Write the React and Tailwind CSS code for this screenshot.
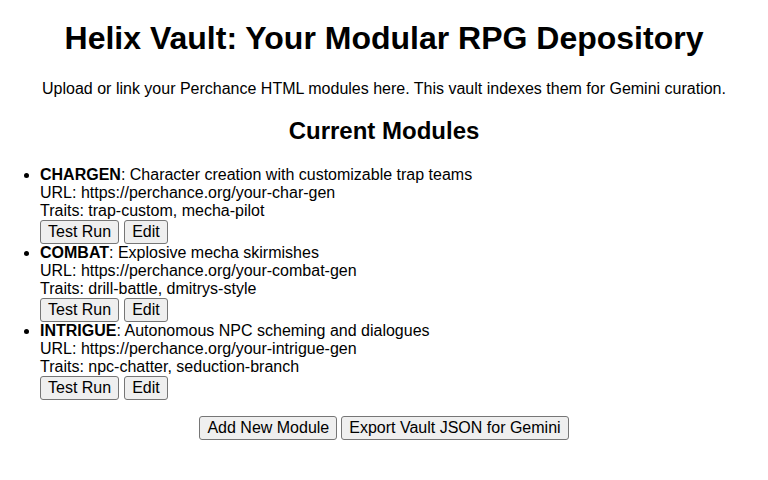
import React from 'react';

const modules = [
  {
    name: 'CHARGEN',
    desc: 'Character creation with customizable trap teams',
    url: 'https://perchance.org/your-char-gen',
    traits: 'trap-custom, mecha-pilot',
  },
  {
    name: 'COMBAT',
    desc: 'Explosive mecha skirmishes',
    url: 'https://perchance.org/your-combat-gen',
    traits: 'drill-battle, dmitrys-style',
  },
  {
    name: 'INTRIGUE',
    desc: 'Autonomous NPC scheming and dialogues',
    url: 'https://perchance.org/your-intrigue-gen',
    traits: 'npc-chatter, seduction-branch',
  },
];

function Btn({ children }) {
  return (
    <button className="h-6 px-[7px] border border-[#767676] rounded-[3px] bg-[#efefef] text-black text-base leading-[18px] cursor-pointer hover:bg-[#e5e5e5]">
      {children}
    </button>
  );
}

export default function App() {
  return (
    <div className="min-h-screen bg-white text-black font-['Liberation_Sans',Arial,sans-serif] text-base leading-[18px]">
      <h1 className="pt-[20px] text-[32px] leading-[37px] font-bold text-center">
        Helix Vault: Your Modular RPG Depository
      </h1>
      <p className="mt-[23px] text-center">
        Upload or link your Perchance HTML modules here. This vault indexes them for Gemini curation.
      </p>
      <h2 className="mt-[19px] text-2xl leading-[28px] font-bold text-center">Current Modules</h2>
      <ul className="mt-[21px] pl-10 list-disc">
        {modules.map((m) => (
          <li key={m.name}>
            <div>
              <strong>{m.name}</strong>: {m.desc}
            </div>
            <div>URL: {m.url}</div>
            <div>Traits: {m.traits}</div>
            <div className="flex gap-[5px]">
              <Btn>Test Run</Btn>
              <Btn>Edit</Btn>
            </div>
          </li>
        ))}
      </ul>
      <div className="mt-4 flex justify-center gap-[4px]">
        <Btn>Add New Module</Btn>
        <Btn>Export Vault JSON for Gemini</Btn>
      </div>
    </div>
  );
}
